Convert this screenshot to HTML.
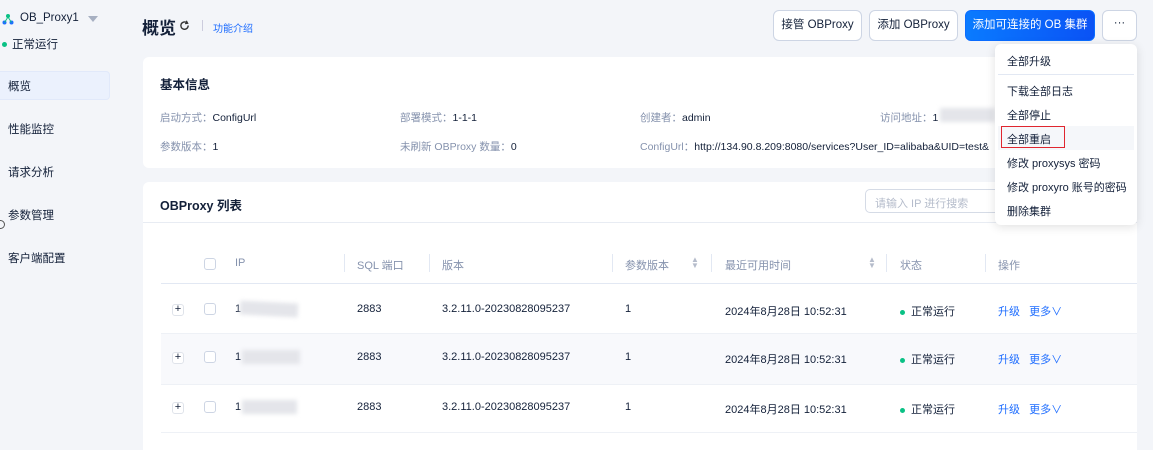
<!DOCTYPE html>
<html><head><meta charset="utf-8"><style>
*{margin:0;padding:0;box-sizing:border-box}
html,body{width:1153px;height:450px;overflow:hidden}
body{background:#f3f5f9;font-family:"Liberation Sans","Noto Sans CJK SC",sans-serif;font-size:11px;color:#132039;position:relative}
.a{position:absolute;white-space:nowrap}
.card{position:absolute;background:#fff;border-radius:6px}
.g{color:#8592ad}
.btn{position:absolute;top:10px;height:31px;border:1px solid #cdd5e4;border-radius:6px;background:#fff;font-size:11.5px;line-height:29px;text-align:center;color:#132039}
.cb{position:absolute;width:12px;height:12px;border:1px solid #cdd5e4;border-radius:3px;background:#fff}
.pl{position:absolute;width:12px;height:12px;border:1px solid #dfe3ea;border-radius:3px;background:#fff;font-size:11px;line-height:9px;text-align:center}
.dot{display:inline-block;width:5px;height:5px;border-radius:50%;background:#0ac185;margin-right:6px;vertical-align:middle}
.blur{position:absolute;height:14px;background:#e4e5ea;filter:blur(2px)}
.sep{position:absolute;width:1px;height:18px;background:#e2e8f3}
.mi{position:absolute;left:1007px;font-size:11px}
.side{position:absolute;left:8px;font-size:11.5px}
</style></head><body>
<svg class="a" style="left:2px;top:13px" width="12" height="12" viewBox="0 0 12 12"><circle cx="6" cy="3" r="2" fill="#0ac185"/><circle cx="2.5" cy="9.5" r="2" fill="#1e6dff"/><circle cx="9.5" cy="9.5" r="2" fill="#1e6dff"/><path d="M6 4L2.5 9.5M6 4L9.5 9.5" stroke="#0ac185" stroke-width="1"/></svg>
<div class="a" style="left:20px;top:12px;font-size:11.5px">OB_Proxy1</div>
<div class="a" style="left:88px;top:16px;width:0;height:0;border-left:5px solid transparent;border-right:5px solid transparent;border-top:6px solid #a7b0c2"></div>
<div class="a" style="left:2px;top:36px;font-size:11.5px"><span class="dot" style="margin-right:5px"></span>正常运行</div>
<div class="a" style="left:0;top:71px;width:110px;height:29px;background:#ebf1fd;border-radius:0 4px 4px 0;border:1px solid #e1e9fa;border-left:none"></div>
<div class="side" style="top:78px">概览</div>
<div class="side" style="top:121px">性能监控</div>
<div class="side" style="top:164px">请求分析</div>
<div class="side" style="top:207px">参数管理</div>
<div class="a" style="left:-4px;top:220px;width:9px;height:9px;border:1.5px solid #555;border-radius:50%"></div>
<div class="side" style="top:250px">客户端配置</div>
<div class="a" style="left:142px;top:14px;font-size:17px;font-weight:bold">概览</div>
<svg class="a" style="left:179px;top:20px" width="11" height="11" viewBox="0 0 12 12"><path d="M10 6A4 4 0 1 1 8.5 3" fill="none" stroke="#333" stroke-width="1.5"/><path d="M8 0.8L9.5 3.6L6.6 4" fill="none" stroke="#333" stroke-width="1.3"/></svg>
<div class="a" style="left:202px;top:20px;width:1px;height:11px;background:#ccd"></div>
<div class="a" style="left:213px;top:20px;font-size:10px;color:#1e6dff">功能介绍</div>
<div class="btn" style="left:773px;width:89px">接管 OBProxy</div>
<div class="btn" style="left:869px;width:89px">添加 OBProxy</div>
<div class="btn" style="left:965px;width:130px;border-color:#0a6cff;color:#fff;background:linear-gradient(90deg,#0a7bff,#0a52f5)">添加可连接的 OB 集群</div>
<div class="btn" style="left:1102px;width:35px;line-height:24px">···</div>
<div class="card" style="left:143px;top:57px;width:994px;height:111px"></div>
<div class="a" style="left:160px;top:74px;font-size:12.5px;font-weight:bold">基本信息</div>
<div class="a" style="left:160px;top:110px;font-size:10.5px"><span class="g">启动方式：</span>ConfigUrl</div>
<div class="a" style="left:160px;top:139px;font-size:10.5px"><span class="g">参数版本：</span>1</div>
<div class="a" style="left:400px;top:110px;font-size:10.5px"><span class="g">部署模式：</span>1-1-1</div>
<div class="a" style="left:400px;top:139px;font-size:10.5px"><span class="g">未刷新 OBProxy 数量：</span>0</div>
<div class="a" style="left:640px;top:110px;font-size:10.5px"><span class="g">创建者：</span>admin</div>
<div class="a" style="left:640px;top:139px;font-size:10.5px"><span class="g">ConfigUrl：</span>http://134.90.8.209:8080/services?User_ID=alibaba&amp;UID=test&amp;</div>
<div class="a" style="left:880px;top:110px;font-size:10.5px"><span class="g">访问地址：</span>1</div>
<div class="blur" style="left:940px;top:108px;width:55px"></div>
<div class="card" style="left:143px;top:182px;width:994px;height:280px"></div>
<div class="a" style="left:160px;top:195px;font-size:12.5px;font-weight:bold">OBProxy 列表</div>
<div class="a" style="left:143px;top:222px;width:994px;height:1px;background:#e8ecf3"></div>
<div class="a" style="left:865px;top:189px;width:140px;height:24px;border:1px solid #d5dbe6;border-radius:5px;background:#fff"></div>
<div class="a" style="left:875px;top:195px;color:#b5bccb">请输入 IP 进行搜索</div>
<div class="a" style="left:161px;top:283px;width:976px;height:1px;background:#e2e8f3"></div>
<div class="cb" style="left:204px;top:258px"></div>
<div class="a g" style="left:235px;top:257px">IP</div>
<div class="sep" style="left:344px;top:254px"></div>
<div class="a g" style="left:357px;top:257px">SQL 端口</div>
<div class="sep" style="left:429px;top:254px"></div>
<div class="a g" style="left:442px;top:257px">版本</div>
<div class="sep" style="left:612px;top:254px"></div>
<div class="a g" style="left:625px;top:257px">参数版本</div>
<div class="a" style="left:691px;top:257px;font-size:8px;color:#b5bccb;line-height:6px">▲<br>▼</div>
<div class="sep" style="left:711px;top:254px"></div>
<div class="a g" style="left:725px;top:257px">最近可用时间</div>
<div class="a" style="left:868px;top:257px;font-size:8px;color:#b5bccb;line-height:6px">▲<br>▼</div>
<div class="sep" style="left:886px;top:254px"></div>
<div class="a g" style="left:900px;top:257px">状态</div>
<div class="sep" style="left:985px;top:254px"></div>
<div class="a g" style="left:998px;top:257px">操作</div>
<div class="a" style="left:161px;top:334px;width:976px;height:50px;background:#f8f9fc"></div>
<div class="a" style="left:161px;top:333px;width:976px;height:1px;background:#eef1f6"></div>
<div class="a" style="left:161px;top:384px;width:976px;height:1px;background:#eef1f6"></div>
<div class="a" style="left:161px;top:432px;width:976px;height:1px;background:#eef1f6"></div>

<div class="pl" style="left:172px;top:304px">+</div><div class="cb" style="left:204px;top:303px"></div><div class="a" style="left:235px;top:303px">1</div><div class="blur" style="left:240px;top:302px;width:58px;transform:rotate(3deg)"></div>
<div class="a" style="left:357px;top:303px">2883</div><div class="a" style="left:442px;top:303px">3.2.11.0-20230828095237</div><div class="a" style="left:625px;top:303px">1</div><div class="a" style="left:725px;top:303px">2024年8月28日 10:52:31</div><div class="a" style="left:900px;top:303px"><span class="dot"></span>正常运行</div><div class="a" style="left:998px;top:303px;color:#1e6dff">升级 &nbsp; 更多∨</div>

<div class="pl" style="left:172px;top:352px">+</div><div class="cb" style="left:204px;top:351px"></div><div class="a" style="left:235px;top:351px">1</div><div class="blur" style="left:242px;top:350px;width:58px"></div>
<div class="a" style="left:357px;top:351px">2883</div><div class="a" style="left:442px;top:351px">3.2.11.0-20230828095237</div><div class="a" style="left:625px;top:351px">1</div><div class="a" style="left:725px;top:351px">2024年8月28日 10:52:31</div><div class="a" style="left:900px;top:351px"><span class="dot"></span>正常运行</div><div class="a" style="left:998px;top:351px;color:#1e6dff">升级 &nbsp; 更多∨</div>

<div class="pl" style="left:172px;top:402px">+</div><div class="cb" style="left:204px;top:401px"></div><div class="a" style="left:235px;top:401px">1</div><div class="blur" style="left:242px;top:400px;width:55px"></div>
<div class="a" style="left:357px;top:401px">2883</div><div class="a" style="left:442px;top:401px">3.2.11.0-20230828095237</div><div class="a" style="left:625px;top:401px">1</div><div class="a" style="left:725px;top:401px">2024年8月28日 10:52:31</div><div class="a" style="left:900px;top:401px"><span class="dot"></span>正常运行</div><div class="a" style="left:998px;top:401px;color:#1e6dff">升级 &nbsp; 更多∨</div>

<div class="a" style="left:995px;top:44px;width:142px;height:181px;background:#fff;border-radius:6px;box-shadow:0 2px 10px rgba(0,0,0,.12)"></div>
<div class="mi" style="top:53px">全部升级</div>
<div class="a" style="left:998px;top:74px;width:136px;height:1px;background:#e2e8f3"></div>
<div class="mi" style="top:83px">下载全部日志</div>
<div class="mi" style="top:107px">全部停止</div>
<div class="a" style="left:998px;top:126px;width:136px;height:24px;background:#f5f7fa"></div>
<div class="a" style="left:1001px;top:126px;width:64px;height:22px;border:1.5px solid #e0262f"></div>
<div class="mi" style="top:131px">全部重启</div>
<div class="mi" style="top:155px">修改 proxysys 密码</div>
<div class="mi" style="top:179px">修改 proxyro 账号的密码</div>
<div class="mi" style="top:203px">删除集群</div>
</body></html>
